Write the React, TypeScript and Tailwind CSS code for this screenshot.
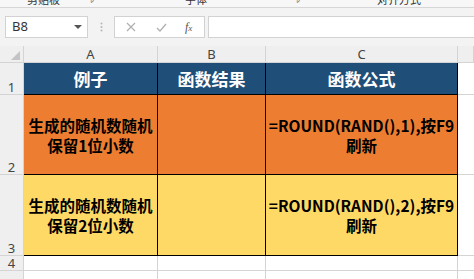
import React from "react";

const cjk = { fontFamily: '"Noto Sans CJK SC", "Noto Sans", sans-serif' };
const ui = { fontFamily: '"Noto Sans", "Noto Sans CJK SC", sans-serif' };

const RowHead = ({ n, h }: { n: string; h: string }) => (
  <div
    className={`${h} flex items-end justify-center bg-[#efefef] border-r border-b border-[#d4d4d4] text-[13px] leading-[13px] text-[#444] overflow-hidden`}
    style={ui}
  >
    {n}
  </div>
);

const App = () => {
  return (
    <div className="w-[474px] h-[279px] overflow-hidden bg-[#f3f3f3] relative">
      {/* ribbon group labels, cut off */}
      <div
        className="h-[8px] overflow-hidden bg-[#f7f7f7] border-b border-[#d6d6d6] text-[11px] leading-[11px] text-[#333]"
        style={cjk}
      >
        <div className="flex items-start -mt-[6px] w-full">
          <span className="ml-[27px] w-[33px]">剪贴板</span>
          <span className="ml-[30px] w-[5px] text-[9px] text-[#777]">ﾚ</span>
          <span className="ml-[90px] w-[22px]">字体</span>
          <span className="ml-[89px] w-[5px] text-[9px] text-[#777]">ﾚ</span>
          <span className="ml-[76px]">对齐方式</span>
        </div>
      </div>

      {/* formula bar */}
      <div className="h-[38px] flex items-start pt-[8px]">
        <div className="ml-[5px] w-[83px] h-[22px] bg-white border border-[#d2d2d2] flex items-center justify-between pl-[6px] pr-[5px]">
          <span className="text-[13px] text-[#333]" style={ui}>B8</span>
          <svg width="8" height="5" viewBox="0 0 8 5">
            <path d="M0 0 L8 0 L4 4 Z" fill="#555" />
          </svg>
        </div>
        <div className="w-[26px] h-[22px] flex items-center justify-center">
          <svg width="3" height="10" viewBox="0 0 3 10">
            <circle cx="1.5" cy="1.5" r="1" fill="#b5b5b5" />
            <circle cx="1.5" cy="5" r="1" fill="#b5b5b5" />
            <circle cx="1.5" cy="8.5" r="1" fill="#b5b5b5" />
          </svg>
        </div>
        <div className="w-[91px] h-[22px] bg-white border border-[#d2d2d2] flex items-center">
          <svg className="ml-[11px]" width="10" height="10" viewBox="0 0 10 10">
            <path d="M1 1 L9 9 M9 1 L1 9" stroke="#b0b0b0" strokeWidth="1.2" />
          </svg>
          <svg className="ml-[20px]" width="11" height="9" viewBox="0 0 11 9">
            <path d="M1 5 L4 8 L10 1" stroke="#b0b0b0" strokeWidth="1.3" fill="none" />
          </svg>
          <span
            className="ml-[18px] text-[12px] italic text-[#555]"
            style={{ fontFamily: '"Liberation Serif", serif' }}
          >
            f<span className="text-[9px]">x</span>
          </span>
        </div>
        <div className="ml-[3px] flex-1 h-[22px] bg-white border-y border-l border-[#d2d2d2]" />
      </div>

      {/* sheet */}
      <div className="grid grid-cols-[24px_134px_108px_192px_1fr] grid-rows-[17px_32px_80px_81px_15px_20px]">
        {/* column headers */}
        <div className="bg-[#efefef] border-r border-b border-[#d4d4d4] relative">
          <svg className="absolute right-[3px] bottom-[2px]" width="9" height="9" viewBox="0 0 9 9">
            <path d="M9 0 L9 9 L0 9 Z" fill="#c4c4c4" />
          </svg>
        </div>
        {["A", "B", "C", ""].map((c, i) => (
          <div
            key={i}
            className="bg-[#efefef] border-r border-b border-[#d4d4d4] flex items-end justify-center text-[13px] leading-[16px] text-[#444]"
            style={ui}
          >
            {c}
          </div>
        ))}

        {/* row 1 */}
        <RowHead n="1" h="h-[32px]" />
        <div className="bg-[#1f4e79] border-r border-b border-black flex items-center justify-center text-white font-bold text-[17px]" style={cjk}>
          例子
        </div>
        <div className="bg-[#1f4e79] border-r border-b border-black flex items-center justify-center text-white font-bold text-[17px]" style={cjk}>
          函数结果
        </div>
        <div className="bg-[#1f4e79] border-r border-b border-black flex items-center justify-center text-white font-bold text-[17px]" style={cjk}>
          函数公式
        </div>
        <div className="bg-white border-b border-[#d4d4d4]" />

        {/* row 2 */}
        <RowHead n="2" h="h-[80px]" />
        <div className="bg-[#ed7d31] border-r border-b border-black flex items-center justify-center text-center text-black font-bold text-[15.5px] leading-[20px]" style={cjk}>
          生成的随机数随机
          <br />
          保留1位小数
        </div>
        <div className="bg-[#ed7d31] border-r border-b border-black" />
        <div className="bg-[#ed7d31] border-r border-b border-black flex items-center justify-center text-center text-black font-bold text-[15.5px] leading-[20px]" style={cjk}>
          =ROUND(RAND(),1),按F9
          <br />
          刷新
        </div>
        <div className="bg-white border-b border-[#d4d4d4]" />

        {/* row 3 */}
        <RowHead n="3" h="h-[81px]" />
        <div className="bg-[#ffd966] border-r border-b border-black flex items-center justify-center text-center text-black font-bold text-[15.5px] leading-[20px]" style={cjk}>
          生成的随机数随机
          <br />
          保留2位小数
        </div>
        <div className="bg-[#ffd966] border-r border-b border-black" />
        <div className="bg-[#ffd966] border-r border-b border-black flex items-center justify-center text-center text-black font-bold text-[15.5px] leading-[20px]" style={cjk}>
          =ROUND(RAND(),2),按F9
          <br />
          刷新
        </div>
        <div className="bg-white border-b border-[#d4d4d4]" />

        {/* row 4 */}
        <RowHead n="4" h="h-[15px]" />
        <div className="bg-white border-r border-b border-[#d4d4d4]" />
        <div className="bg-white border-r border-b border-[#d4d4d4]" />
        <div className="bg-white border-r border-b border-[#d4d4d4]" />
        <div className="bg-white border-b border-[#d4d4d4]" />

        {/* row 5 */}
        <RowHead n="5" h="h-[20px]" />
        <div className="bg-white border-r border-[#d4d4d4]" />
        <div className="bg-white border-r border-[#d4d4d4]" />
        <div className="bg-white border-r border-[#d4d4d4]" />
        <div className="bg-white" />
      </div>
    </div>
  );
};

export default App;
